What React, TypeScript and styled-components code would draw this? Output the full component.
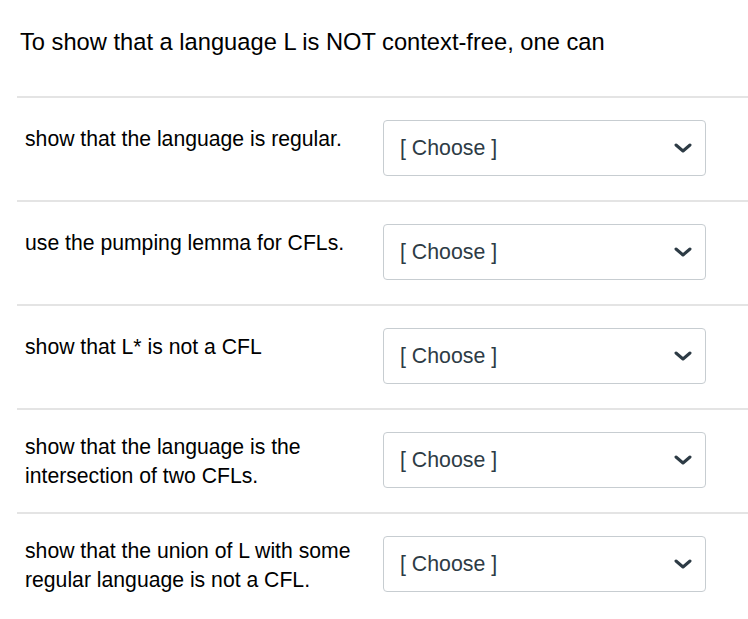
import styled, { createGlobalStyle } from "styled-components";

const GlobalStyle = createGlobalStyle`
  html, body {
    margin: 0;
    padding: 0;
    background: #ffffff;
  }
  body {
    font-family: "Liberation Sans", Arial, Helvetica, sans-serif;
    color: #000000;
  }
`;

const Page = styled.div`
  padding: 0 0 0 17px;
  width: 100%;
  box-sizing: border-box;
`;

const Question = styled.p`
  margin: 28px 0 39px 3px;
  font-size: 23.7px;
  line-height: 29px;
  color: #000000;
`;

const AnswerList = styled.div`
  display: flex;
  flex-direction: column;
`;

const AnswerRow = styled.div`
  display: flex;
  align-items: flex-start;
  border-top: 2px solid #e4e4e4;
  padding: 22px 0 21px 8px;
`;

// single-line prompts sit a little lower than wrapped ones
const Prompt = styled.div<{ $single: boolean }>`
  width: 340px;
  margin-top: ${({ $single }) => ($single ? "4px" : "0")};
  margin-right: 18px;
  font-size: 21.2px;
  line-height: 29px;
  color: #000000;
`;

const Select = styled.div`
  display: flex;
  align-items: center;
  justify-content: space-between;
  box-sizing: border-box;
  width: 323px;
  height: 56px;
  margin-bottom: 3px;
  padding: 0 13px 0 16px;
  border: 1px solid #c7cdd1;
  border-radius: 4px;
  background: #ffffff;
  font-size: 21.3px;
  color: #2d3b45;
`;

const Chevron = () => (
  <svg width="18" height="10" viewBox="0 0 18 10" aria-hidden="true">
    <polyline
      points="2,2 9,8 16,2"
      fill="none"
      stroke="#2d3b45"
      strokeWidth="3"
      strokeLinecap="round"
      strokeLinejoin="round"
    />
  </svg>
);

const answers = [
  { text: "show that the language is regular.", single: true },
  { text: "use the pumping lemma for CFLs.", single: true },
  { text: "show that L* is not a CFL", single: true },
  { text: "show that the language is the intersection of two CFLs.", single: false },
  { text: "show that the union of L with some regular language is not a CFL.", single: false },
];

export default function App() {
  return (
    <>
      <GlobalStyle />
      <Page>
        <Question>To show that a language L is NOT context-free, one can</Question>
        <AnswerList>
          {answers.map((a) => (
            <AnswerRow key={a.text}>
              <Prompt $single={a.single}>{a.text}</Prompt>
              <Select>
                <span>[ Choose ]</span>
                <Chevron />
              </Select>
            </AnswerRow>
          ))}
        </AnswerList>
      </Page>
    </>
  );
}
